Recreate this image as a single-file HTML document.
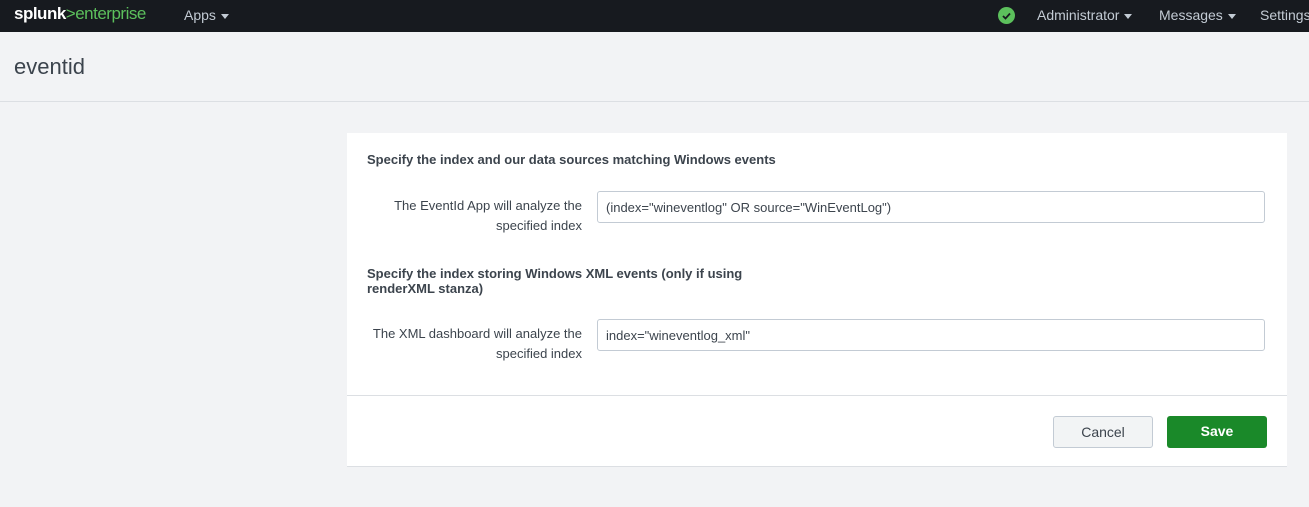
<!DOCTYPE html>
<html><head><meta charset="utf-8"><style>
*{box-sizing:border-box;margin:0;padding:0}
body{width:1309px;height:507px;overflow:hidden;background:#f2f3f5;font-family:"Liberation Sans",sans-serif;position:relative}
.top{position:absolute;left:0;top:0;width:1309px;height:32px;background:#171a1f;color:#c3cbd4;font-size:14px}
.top span{position:absolute;top:7px}
.logo{left:14px;font-size:17px;top:4px!important;letter-spacing:-0.5px}
.logo b{color:#fff;font-weight:bold}
.logo i{font-style:normal;color:#5cc05c}
.tri{display:inline-block;width:0;height:0;border-left:4px solid transparent;border-right:4px solid transparent;border-top:5px solid #c3cbd4;vertical-align:middle;margin-left:5px}
.check{position:absolute;left:998px;top:7px;width:17px;height:17px;border-radius:50%;background:#5cc05c}
.hdr{position:absolute;top:32px;left:0;width:1309px;height:70px;border-bottom:1px solid #dcdfe3}
.hdr h1{position:absolute;left:14px;top:22px;font-size:22px;font-weight:normal;color:#3c444d}
.card{position:absolute;left:347px;top:133px;width:940px;height:334px;background:#fff;border-bottom:1px solid #dcdfe3}
.sec{position:absolute;left:20px;font-size:13px;font-weight:bold;color:#3c444d;line-height:15px}
.lbl{position:absolute;left:20px;width:215px;text-align:right;font-size:13px;color:#3c444d;line-height:20px}
.inp{position:absolute;left:250px;width:668px;height:32px;border:1px solid #c3cbd4;border-radius:3px;font-size:13px;color:#3c444d;padding:8px 8px}
.foot{position:absolute;left:0;top:262px;width:940px;border-top:1px solid #dcdfe3}
.btn{position:absolute;top:283px;width:100px;height:32px;border-radius:3px;font-size:14px;text-align:center;line-height:30px}
</style></head><body>
<div class="top">
<span class="logo"><b>splunk</b><i>&gt;enterprise</i></span>
<span style="left:184px">Apps<i class="tri"></i></span>
<div class="check"><svg width="17" height="17"><path d="M5 9l2.5 2.5L12 6.5" stroke="#171a1f" stroke-width="1.8" fill="none"/></svg></div>
<span style="left:1037px">Administrator<i class="tri"></i></span>
<span style="left:1159px">Messages<i class="tri"></i></span>
<span style="left:1260px">Settings</span>
</div>
<div class="hdr"><h1>eventid</h1></div>
<div class="card">
<div class="sec" style="top:19px">Specify the index and our data sources matching Windows events</div>
<div class="lbl" style="top:63px">The EventId App will analyze the specified index</div>
<div class="inp" style="top:58px">(index="wineventlog" OR source="WinEventLog")</div>
<div class="sec" style="top:133px;width:400px">Specify the index storing Windows XML events (only if using renderXML stanza)</div>
<div class="lbl" style="top:191px">The XML dashboard will analyze the specified index</div>
<div class="inp" style="top:186px">index="wineventlog_xml"</div>
<div class="foot"></div>
<div class="btn" style="left:706px;background:#f2f4f5;border:1px solid #c3cbd4;color:#3c444d">Cancel</div>
<div class="btn" style="left:820px;background:#1a8929;color:#fff;font-weight:bold">Save</div>
</div>
</body></html>
